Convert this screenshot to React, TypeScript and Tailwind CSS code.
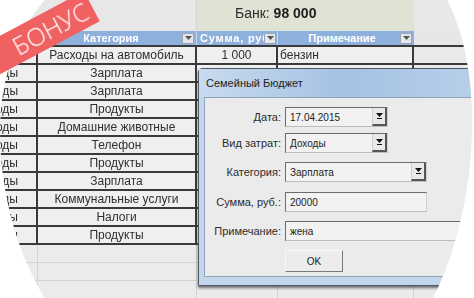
import React from "react";

type SheetRow = { kind: string; category: string; sum?: string; note?: string };

const sheetRows: SheetRow[] = [
    { kind: "", category: "Расходы на автомобиль", sum: "1 000", note: "бензин" },
    { kind: "Доходы", category: "Зарплата", sum: "25 000" },
    { kind: "Доходы", category: "Зарплата" },
    { kind: "Расходы", category: "Продукты" },
    { kind: "Расходы", category: "Домашние животные" },
    { kind: "Расходы", category: "Телефон" },
    { kind: "Расходы", category: "Продукты" },
    { kind: "Доходы", category: "Зарплата" },
    { kind: "Расходы", category: "Коммунальные услуги" },
    { kind: "Расходы", category: "Налоги" },
    { kind: "Расходы", category: "Продукты" },
];

const FilterButton = () => (
    <div className="w-[12px] h-[11px] bg-[#e6e6e6] border border-[#9aa6b4] flex items-center justify-center">
        <svg width="7" height="4" viewBox="0 0 7 4"><path d="M0 0h7L3.5 4z" fill="#555" /></svg>
    </div>
);

const DropButton = () => (
    <div className="w-[15px] h-full bg-[#e9e9e9] border-r-2 border-b-2 border-[#555] border-l border-l-[#cfcfcf] flex items-center justify-center">
        <svg width="7" height="6" viewBox="0 0 7 6"><path d="M0 0h7L3.5 4z" fill="#111" /><rect x="1" y="5" width="5" height="1" fill="#111" /></svg>
    </div>
);

interface FieldProps {
    label: string;
    value: string;
    width: string;
    drop?: boolean;
    top: string;
}

const Field = (props: FieldProps) => (
    <div className={`flex items-center ${props.top}`}>
        <div className="w-[77px] text-right text-[11px] text-[#2b2b2b] pr-[1px]">{props.label}</div>
        <div className={`ml-[3px] h-[20px] flex items-center justify-between border border-[#6c6c6c] border-r-[#d2d2d2] border-b-[#bdbdbd] bg-[#f2f2f2] ${props.width}`}>
            <span className="pl-[4px] text-[10px] text-[#222]">{props.value}</span>
            {props.drop && <DropButton />}
        </div>
    </div>
);

const BudgetDialog = () => (
    <div className="absolute left-[198px] top-[108px] w-[290px] h-[218px] flex flex-col border border-[#4e5a68] rounded-t-[4px] bg-[#c3d6ec] shadow-[0_2px_3px_rgba(0,0,0,0.55)]">
        <div className="h-[28px] flex items-center pl-[7px] text-[11px] text-[#1d1d1d] bg-gradient-to-r from-[#c8daee] via-[#a5c2e3] to-[#b9d0ea]">
            Семейный Бюджет
        </div>
        <div className="flex-1 ml-[5px] mb-[8px] bg-[#ebebeb] border border-[#8fa3ba] flex flex-col">
            <Field top="mt-[9px]" label="Дата:" value="17.04.2015" width="w-[103px]" drop />
            <Field top="mt-[6px]" label="Вид затрат:" value="Доходы" width="w-[103px]" drop />
            <Field top="mt-[9px]" label="Категория:" value="Зарплата" width="w-[142px]" drop />
            <Field top="mt-[10px]" label="Сумма, руб.:" value="20000" width="w-[142px]" />
            <Field top="mt-[9px]" label="Примечание:" value="жена" width="w-[200px]" />
            <div className="mt-[9px] ml-[80px] w-[58px] h-[22px] flex items-center justify-center bg-[#ececec] border border-[#f8f8f8] border-r-[#7a7a7a] border-b-[#7a7a7a] text-[10px] text-[#222]">
                OK
            </div>
        </div>
    </div>
);

export default function App() {
    return (
        <div className="relative w-[474px] h-[298px] overflow-hidden bg-white" style={{ fontFamily: '"Liberation Sans", Arial, sans-serif' }}>
            {/* lens-shaped crop of the sheet */}
            <div className="relative -mt-[40px] w-[472px] h-[460px] overflow-hidden rounded-[126px_74px_199px_240px/170px_160px_300px_290px] bg-[#ebebeb] pt-[40px]">
                <div className="blur-[0.35px]">
                    {/* top row with bank total */}
                    <div className="flex h-[31px]">
                        <div className="w-[197px] bg-[#e7e7e7] border-r border-[#d4d4d4]" />
                        <div className="w-[217px] bg-[#dee3d4] flex items-center pl-[38px] pb-[4px] text-[14px] text-[#2e2e2e]">
                            Банк:&nbsp;<b className="text-[#1e1e1e]">98 000</b>
                        </div>
                        <div className="flex-1 bg-[#e8e8e8]" />
                    </div>

                    {/* header */}
                    <div className="flex h-[16px] border-b-2 border-[#3a3a3a] text-[11px] font-bold text-white">
                        <div className="w-[38px] bg-[#8eb0dc] border-r border-[#c9d8ec]" />
                        <div className="w-[159px] bg-[#8eb0dc] border-r border-[#c9d8ec] flex items-center">
                            <span className="flex-1 text-center pl-[2px]">Категория</span>
                            <div className="mr-[2px]"><FilterButton /></div>
                        </div>
                        <div className="w-[81px] bg-[#8eb0dc] border-r border-[#c9d8ec] flex items-center">
                            <span className="flex-1 pl-[3px] tracking-[0.8px] whitespace-nowrap overflow-hidden">Сумма, руб.</span>
                            <div className="mr-[1px]"><FilterButton /></div>
                        </div>
                        <div className="w-[136px] bg-[#8eb0dc] flex items-center">
                            <span className="flex-1 text-center pl-[6px]">Примечание</span>
                            <div className="mr-[2px]"><FilterButton /></div>
                        </div>
                        <div className="flex-1 bg-[#e6e6e6]" />
                    </div>

                    {/* data rows */}
                    {sheetRows.map((row, i) => (
                        <div key={i} className="flex h-[18px] border-b-2 border-[#3a3a3a] text-[12px] leading-[16px] text-[#303030]">
                            <div className="w-[38px] border-r-2 border-[#3a3a3a] bg-[#efefef] flex justify-end pr-[18px] whitespace-nowrap">{row.kind}</div>
                            <div className="w-[159px] border-r-2 border-[#3a3a3a] bg-[#efefef] text-center whitespace-nowrap">{row.category}</div>
                            <div className="w-[81px] border-r-2 border-[#3a3a3a] bg-[#efefef] text-center">{row.sum}</div>
                            <div className="w-[136px] border-r-2 border-[#3a3a3a] bg-[#efefef] pl-[2px]">{row.note}</div>
                            <div className="flex-1 bg-[#e9e9e9]" />
                        </div>
                    ))}

                    {/* empty sheet rows */}
                    {[0, 1, 2, 3, 4, 5].map((i) => (
                        <div key={i} className="flex h-[18px] border-b border-[#d3d3d3]">
                            <div className="w-[38px] border-r border-[#d3d3d3]" />
                            <div className="w-[159px] border-r border-[#d3d3d3]" />
                            <div className="w-[81px] border-r border-[#d3d3d3]" />
                            <div className="w-[136px] border-r border-[#d3d3d3]" />
                            <div className="flex-1" />
                        </div>
                    ))}
                </div>

                <BudgetDialog />
            </div>

            <div
                className="absolute left-[-40px] top-[22px] w-[140px] h-[34px] rotate-[-28deg] bg-[#f06262] flex items-center justify-end pr-[6px] text-white text-[25px] font-light leading-none"
                style={{ fontFamily: '"Open Sans", "Liberation Sans", sans-serif' }}
            >
                БОНУС
            </div>
        </div>
    );
}
